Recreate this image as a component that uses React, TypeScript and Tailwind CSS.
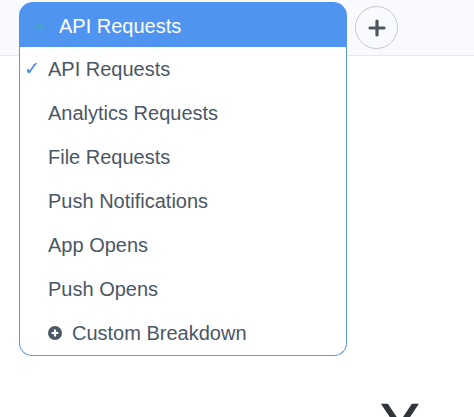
import React from 'react';

const items = ['API Requests', 'Analytics Requests', 'File Requests', 'Push Notifications', 'App Opens', 'Push Opens'];

export default function App() {
  const selected = 'API Requests';

  return (
    <div className="relative w-[474px] h-[417px] overflow-hidden bg-white font-['Liberation_Sans',Arial,sans-serif]">
      {/* Toolbar */}
      <div className="h-[56px] bg-[#f8fafd] border-b border-[#e6eaee] flex items-center pl-[355px]">
        <button className="w-[43px] h-[43px] rounded-full border border-[#c4c8cc] flex items-center justify-center text-[#4b5662]">
          <svg width="18" height="18" viewBox="0 0 18 18">
            <path d="M9 2v14M2 9h14" stroke="currentColor" strokeWidth="3.2" strokeLinecap="round" />
          </svg>
        </button>
      </div>

      {/* Page content */}
      <div className="flex justify-end pr-[52px] pt-[341px]">
        <span className="text-[66px] leading-none text-[#2f353b] font-['DejaVu_Sans',sans-serif]">X</span>
      </div>

      {/* Dropdown menu */}
      <div className="absolute left-[19px] top-[2px] w-[328px]">
        <div className="h-[45px] bg-[#4f94f0] rounded-t-[14px] flex items-center pl-[17px] gap-[15px] pt-[3px]">
          <span className="w-[8px] h-[7px] bg-[#45a8c8] opacity-70" />
          <span className="text-white text-[20px]">{selected}</span>
        </div>
        <div className="border border-t-0 border-[#5c9ae6] rounded-b-[13px] bg-white">
          {items.map((item) => (
            <div key={item} className="h-[44px] flex items-center relative pl-[28px]">
              {item === selected && (
                <span className="absolute left-[4px] text-[#3b87e6] text-[19px]">✓</span>
              )}
              <span className="text-[20px] text-[#4a5764]">{item}</span>
            </div>
          ))}
          <div className="h-[44px] flex items-center pl-[28px] gap-[10px]">
            <svg width="14" height="14" viewBox="0 0 14 14">
              <circle cx="7" cy="7" r="7" fill="#4a5764" />
              <path d="M7 3.6v6.8M3.6 7h6.8" stroke="white" strokeWidth="2.2" />
            </svg>
            <span className="text-[20px] text-[#4a5764]">Custom Breakdown</span>
          </div>
        </div>
      </div>
    </div>
  );
}
